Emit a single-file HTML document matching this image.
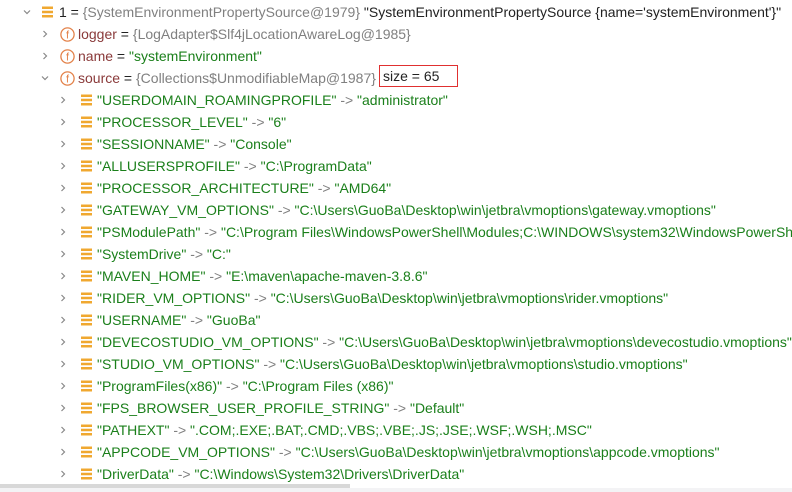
<!DOCTYPE html>
<html><head><style>
html,body{margin:0;width:792px;height:492px;overflow:hidden}
body{background:#fff;font-family:"Liberation Sans",sans-serif;font-size:14px;position:relative}
.r{position:absolute;height:22px;line-height:22px;white-space:nowrap;left:0;width:792px;overflow:hidden}
.ch{position:absolute;top:0}
.ic{position:absolute;top:5px}
.t{position:absolute;top:0}
.k{color:#8a3a3a}.g{color:#808080}.s{color:#1a7f1a}.b{color:#222}
</style></head><body>
<svg width="0" height="0" style="position:absolute"><defs>
<symbol id="down" viewBox="0 0 10 10"><path d="M2 3.5L5 6.5L8 3.5" fill="none" stroke="#888" stroke-width="1.2"/></symbol>
<symbol id="right" viewBox="0 0 10 10"><path d="M3.5 2L6.5 5L3.5 8" fill="none" stroke="#888" stroke-width="1.2"/></symbol>
<symbol id="bars" viewBox="0 0 11 12"><rect x="0" y="0.5" width="11" height="2.5" fill="#f0a830"/><rect x="0" y="4.75" width="11" height="2.5" fill="#f0a830"/><rect x="0" y="9" width="11" height="2.5" fill="#f0a830"/></symbol>
<symbol id="f" viewBox="0 0 15 15"><circle cx="7.5" cy="7.5" r="6.6" fill="none" stroke="#e3824a" stroke-width="1.3"/><text x="7.5" y="11.3" text-anchor="middle" font-size="11" fill="#e3824a" font-family="Liberation Sans">f</text></symbol>
</defs></svg>

<div class="r" style="top:1px"><svg class="ch" style="left:22px;top:6px" width="10" height="10"><use href="#down"/></svg><svg class="ic" style="left:42px" width="11" height="12"><use href="#bars"/></svg><span class="t b" style="left:59px">1 = <span class="g">{SystemEnvironmentPropertySource@1979}</span> "SystemEnvironmentPropertySource {name='systemEnvironment'}"</span></div>
<div class="r" style="top:23px"><svg class="ch" style="left:40px;top:6px" width="10" height="10"><use href="#right"/></svg><svg class="ic" style="left:60px;top:4px" width="15" height="15"><use href="#f"/></svg><span class="t b" style="left:78px"><span class="k">logger</span> = <span class="g">{LogAdapter$Slf4jLocationAwareLog@1985}</span></span></div>
<div class="r" style="top:45px"><svg class="ch" style="left:40px;top:6px" width="10" height="10"><use href="#right"/></svg><svg class="ic" style="left:60px;top:4px" width="15" height="15"><use href="#f"/></svg><span class="t b" style="left:78px"><span class="k">name</span> = <span class="s">"systemEnvironment"</span></span></div>
<div class="r" style="top:67px"><svg class="ch" style="left:40px;top:6px" width="10" height="10"><use href="#down"/></svg><svg class="ic" style="left:60px;top:4px" width="15" height="15"><use href="#f"/></svg><span class="t b" style="left:78px"><span class="k">source</span> = <span class="g">{Collections$UnmodifiableMap@1987}</span></span></div>
<div style="position:absolute;left:379px;top:65px;width:77px;height:20px;border:1px solid #e03030"></div>
<div class="b" style="position:absolute;top:65px;left:383px;line-height:22px;white-space:nowrap">size = 65</div>

<div id="list"></div>
<div style="position:absolute;left:0;top:484px;width:350px;height:6px;background:#d8d8d8"></div>
<div style="position:absolute;left:0;top:488px;width:792px;height:4px;background:#f3f3f5"></div>
<script>
var rows=[['USERDOMAIN_ROAMINGPROFILE','administrator'],['PROCESSOR_LEVEL','6'],['SESSIONNAME','Console'],['ALLUSERSPROFILE','C:\\ProgramData'],['PROCESSOR_ARCHITECTURE','AMD64'],['GATEWAY_VM_OPTIONS','C:\\Users\\GuoBa\\Desktop\\win\\jetbra\\vmoptions\\gateway.vmoptions'],['PSModulePath','C:\\Program Files\\WindowsPowerShell\\Modules;C:\\WINDOWS\\system32\\WindowsPowerShell\\v1.0\\Modules'],['SystemDrive','C:'],['MAVEN_HOME','E:\\maven\\apache-maven-3.8.6'],['RIDER_VM_OPTIONS','C:\\Users\\GuoBa\\Desktop\\win\\jetbra\\vmoptions\\rider.vmoptions'],['USERNAME','GuoBa'],['DEVECOSTUDIO_VM_OPTIONS','C:\\Users\\GuoBa\\Desktop\\win\\jetbra\\vmoptions\\devecostudio.vmoptions'],['STUDIO_VM_OPTIONS','C:\\Users\\GuoBa\\Desktop\\win\\jetbra\\vmoptions\\studio.vmoptions'],['ProgramFiles(x86)','C:\\Program Files (x86)'],['FPS_BROWSER_USER_PROFILE_STRING','Default'],['PATHEXT','.COM;.EXE;.BAT;.CMD;.VBS;.VBE;.JS;.JSE;.WSF;.WSH;.MSC'],['APPCODE_VM_OPTIONS','C:\\Users\\GuoBa\\Desktop\\win\\jetbra\\vmoptions\\appcode.vmoptions'],['DriverData','C:\\Windows\\System32\\Drivers\\DriverData']];
var h='';function e(s){return s.replace(/&/g,'&amp;').replace(/</g,'&lt;')}
rows.forEach(function(r,i){var t=89+22*i;h+='<div class="r" style="top:'+t+'px"><svg class="ch" style="left:58px;top:6px" width="10" height="10"><use href="#right"/></svg><svg class="ic" style="left:81px" width="11" height="12"><use href="#bars"/></svg><span class="t s" style="left:97px">"'+e(r[0])+'" <span class="g">-&gt;</span> "'+e(r[1])+'"</span></div>';});
document.getElementById('list').innerHTML=h;
</script>
</body></html>
